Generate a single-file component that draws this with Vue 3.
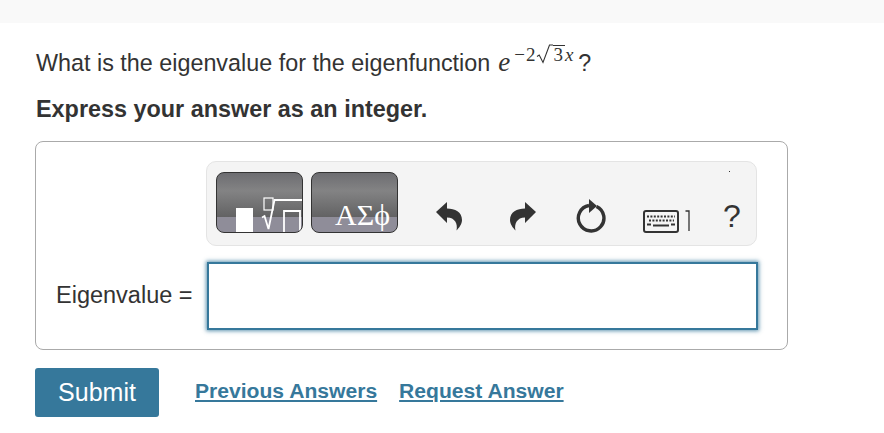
<script setup>
const links = ['Previous Answers', 'Request Answer']
</script>

<template>
  <div class="page">
    <div class="topbar"></div>
    <div class="content">
      <p class="question">
        What is the eigenvalue for the eigenfunction
        <span class="math"><i>e</i><span class="exp"><span class="minus">&minus;</span>2<svg class="radical" width="17" height="20" viewBox="0 0 17 20"><path d="M1 12.5 L3.2 11 L7 18.5 L13.5 1 L17 1" fill="none" stroke="#333" stroke-width="1.1"/></svg><span class="radicand">3</span><i>x</i></span></span>
        <span class="qmark">?</span>
      </p>
      <p class="hint">Express your answer as an integer.</p>

      <div class="answerBox">
        <div class="toolbar">
          <button class="tplBtn">
            <span class="block"></span>
            <svg class="rootIcon" width="42" height="36" viewBox="0 0 42 36">
              <rect x="4" y="2" width="9" height="12" fill="none" stroke="#fff" stroke-width="1.2"/>
              <path d="M2 21.5 L4.5 20 L8.5 33 L14.5 4 L42 4" fill="none" stroke="#fff" stroke-width="1.8"/>
              <path d="M24 36 L24 15 L40 15 L40 36" fill="none" stroke="#fff" stroke-width="1.8"/>
            </svg>
          </button>
          <button class="tplBtn symbols">&Alpha;&Sigma;&#981;</button>

          <svg class="tool undo" width="28" height="30" viewBox="0 0 28 30">
            <path d="M1 11 L12 1 L12 7.5 C20 7.5 27 11 27 19 C27 23 24 27 21.5 29.5 C23 23 20 16.5 12 16.5 L12 22 Z" fill="#333"/>
          </svg>
          <svg class="tool redo" width="28" height="30" viewBox="0 0 28 30">
            <path d="M27 11 L16 1 L16 7.5 C8 7.5 1 11 1 19 C1 23 4 27 6.5 29.5 C5 23 8 16.5 16 16.5 L16 22 Z" fill="#333"/>
          </svg>
          <svg class="tool reset" width="32" height="36" viewBox="0 0 32 36">
            <path d="M14 6.5 A12.8 12.8 0 1 0 21.5 7.5" fill="none" stroke="#333" stroke-width="3.4"/>
            <path d="M14 0 L22 7 L14 14 Z" fill="#333"/>
          </svg>
          <svg class="tool keyboard" width="36" height="24" viewBox="0 0 36 24">
            <rect x="1" y="1" width="34" height="21" rx="2" fill="#f4f4f4" stroke="#333" stroke-width="2"/>
            <path d="M4 6.5 H32" stroke="#333" stroke-width="2" stroke-dasharray="2 1.4"/>
            <path d="M6 10.5 H31" stroke="#333" stroke-width="2" stroke-dasharray="2 1.4"/>
            <path d="M4 14.5 H8 M10 15.5 H26 M28 14.5 H32" stroke="#333" stroke-width="2"/>
          </svg>
          <svg class="bracket" width="6" height="22" viewBox="0 0 6 22">
            <path d="M0.5 1 H4 V21" fill="none" stroke="#333" stroke-width="1.3"/>
          </svg>
          <span class="help">?</span>
          <span class="speck"></span>
        </div>
        <label class="label">Eigenvalue =</label>
        <input class="field" type="text">
      </div>

      <div class="actions">
        <button class="submit">Submit</button>
        <a v-for="link in links" :key="link" class="link" href="#">{{ link }}</a>
      </div>
    </div>
  </div>
</template>

<style scoped>
.page {
  width: 884px;
  height: 433px;
  overflow: hidden;
  background-color: #fff;
  font-family: "Liberation Sans", Arial, sans-serif;
  color: #333;
}

.topbar {
  height: 23px;
  background-color: #f9f9f9;
}

.content {
  padding: 0 96px 0 35px;
}

.question {
  display: flex;
  align-items: baseline;
  margin: 0;
  padding-top: 24px;
  padding-left: 1px;
  height: 47px;
  font-size: 23.35px;
  line-height: 30px;
}

.math {
  margin-left: 8px;
  font-family: "Liberation Serif", serif;
  font-size: 27px;
  white-space: nowrap;
}

.exp {
  position: relative;
  top: -10px;
  margin-left: 4px;
  font-size: 19px;
}

.minus {
  margin-right: 1px;
}

.radical {
  margin-left: 1px;
  vertical-align: -3px;
}

.radicand {
  display: inline-block;
  border-top: 1px solid #333;
  line-height: 17px;
  padding-right: 2px;
}

.qmark {
  margin-left: 5px;
}

.hint {
  margin: 0;
  padding-left: 1px;
  height: 47px;
  box-sizing: border-box;
  font-size: 23.4px;
  line-height: 30px;
  font-weight: bold;
}

.answerBox {
  display: grid;
  grid-template-columns: 150px 552px;
  grid-template-rows: 85px 68px;
  row-gap: 16px;
  align-items: center;
  width: 753px;
  height: 209px;
  box-sizing: border-box;
  padding: 19px 0 0 20px;
  border: 1px solid #aaa;
  border-radius: 8px;
}

.toolbar {
  grid-column: 2;
  position: relative;
  display: flex;
  align-items: flex-start;
  width: 551px;
  height: 85px;
  box-sizing: border-box;
  padding: 10px 0 0 9px;
  background-color: #f4f4f4;
  border: 1px solid #e4e4e4;
  border-radius: 10px;
}

.tplBtn {
  position: relative;
  flex: none;
  width: 87px;
  height: 61px;
  margin-right: 8px;
  padding: 0;
  overflow: hidden;
  border: 1px solid #333;
  border-radius: 8px;
  background: linear-gradient(to bottom, #6d6d71 0, #838384 30%, #626263 75%, #8f8d99 75%, #8f8d99 100%);
}

.block {
  position: absolute;
  left: 19px;
  bottom: 0;
  width: 17px;
  height: 24px;
  background-color: #fff;
}

.rootIcon {
  position: absolute;
  right: 0;
  bottom: 0;
}

.symbols {
  color: #fff;
  font-family: "Liberation Serif", serif;
  font-size: 30px;
  line-height: 32px;
  text-align: right;
  padding: 24px 7px 0 0;
  white-space: nowrap;
}

.tool {
  flex: none;
  display: block;
}

.undo {
  margin: 29px 0 0 29px;
}

.redo {
  margin: 29px 0 0 46px;
}

.reset {
  margin: 27px 0 0 38px;
}

.keyboard {
  margin: 38px 0 0 36px;
}

.bracket {
  margin: 38px 0 0 6px;
}

.help {
  margin: 26px 0 0 32px;
  font-size: 32px;
  line-height: 36px;
}

.speck {
  position: absolute;
  top: 9px;
  right: 26px;
  width: 1px;
  height: 1px;
  background-color: #333;
}

.label {
  grid-column: 1;
  grid-row: 2;
  margin-bottom: 2px;
  font-size: 23.5px;
  line-height: 30px;
}

.field {
  grid-column: 2;
  grid-row: 2;
  width: 551px;
  height: 68px;
  box-sizing: border-box;
  margin: 0 0 0 1px;
  background-color: #fff;
  border: 2px solid #36789b;
  outline: none;
  box-shadow: 0 0 4px 1px rgba(54, 120, 155, 0.8);
}

.actions {
  display: flex;
  align-items: center;
  margin-top: 18px;
}

.submit {
  width: 124px;
  height: 49px;
  margin-right: 36px;
  padding: 0;
  border: none;
  border-radius: 3px;
  background-color: #36789b;
  color: #fff;
  font-family: inherit;
  font-size: 25px;
}

.link {
  margin: 0 22px 4px 0;
  color: #36789b;
  font-size: 21.1px;
  font-weight: bold;
  text-decoration: underline;
}
</style>

<style>
body {
  background-color: #fff;
}
</style>
